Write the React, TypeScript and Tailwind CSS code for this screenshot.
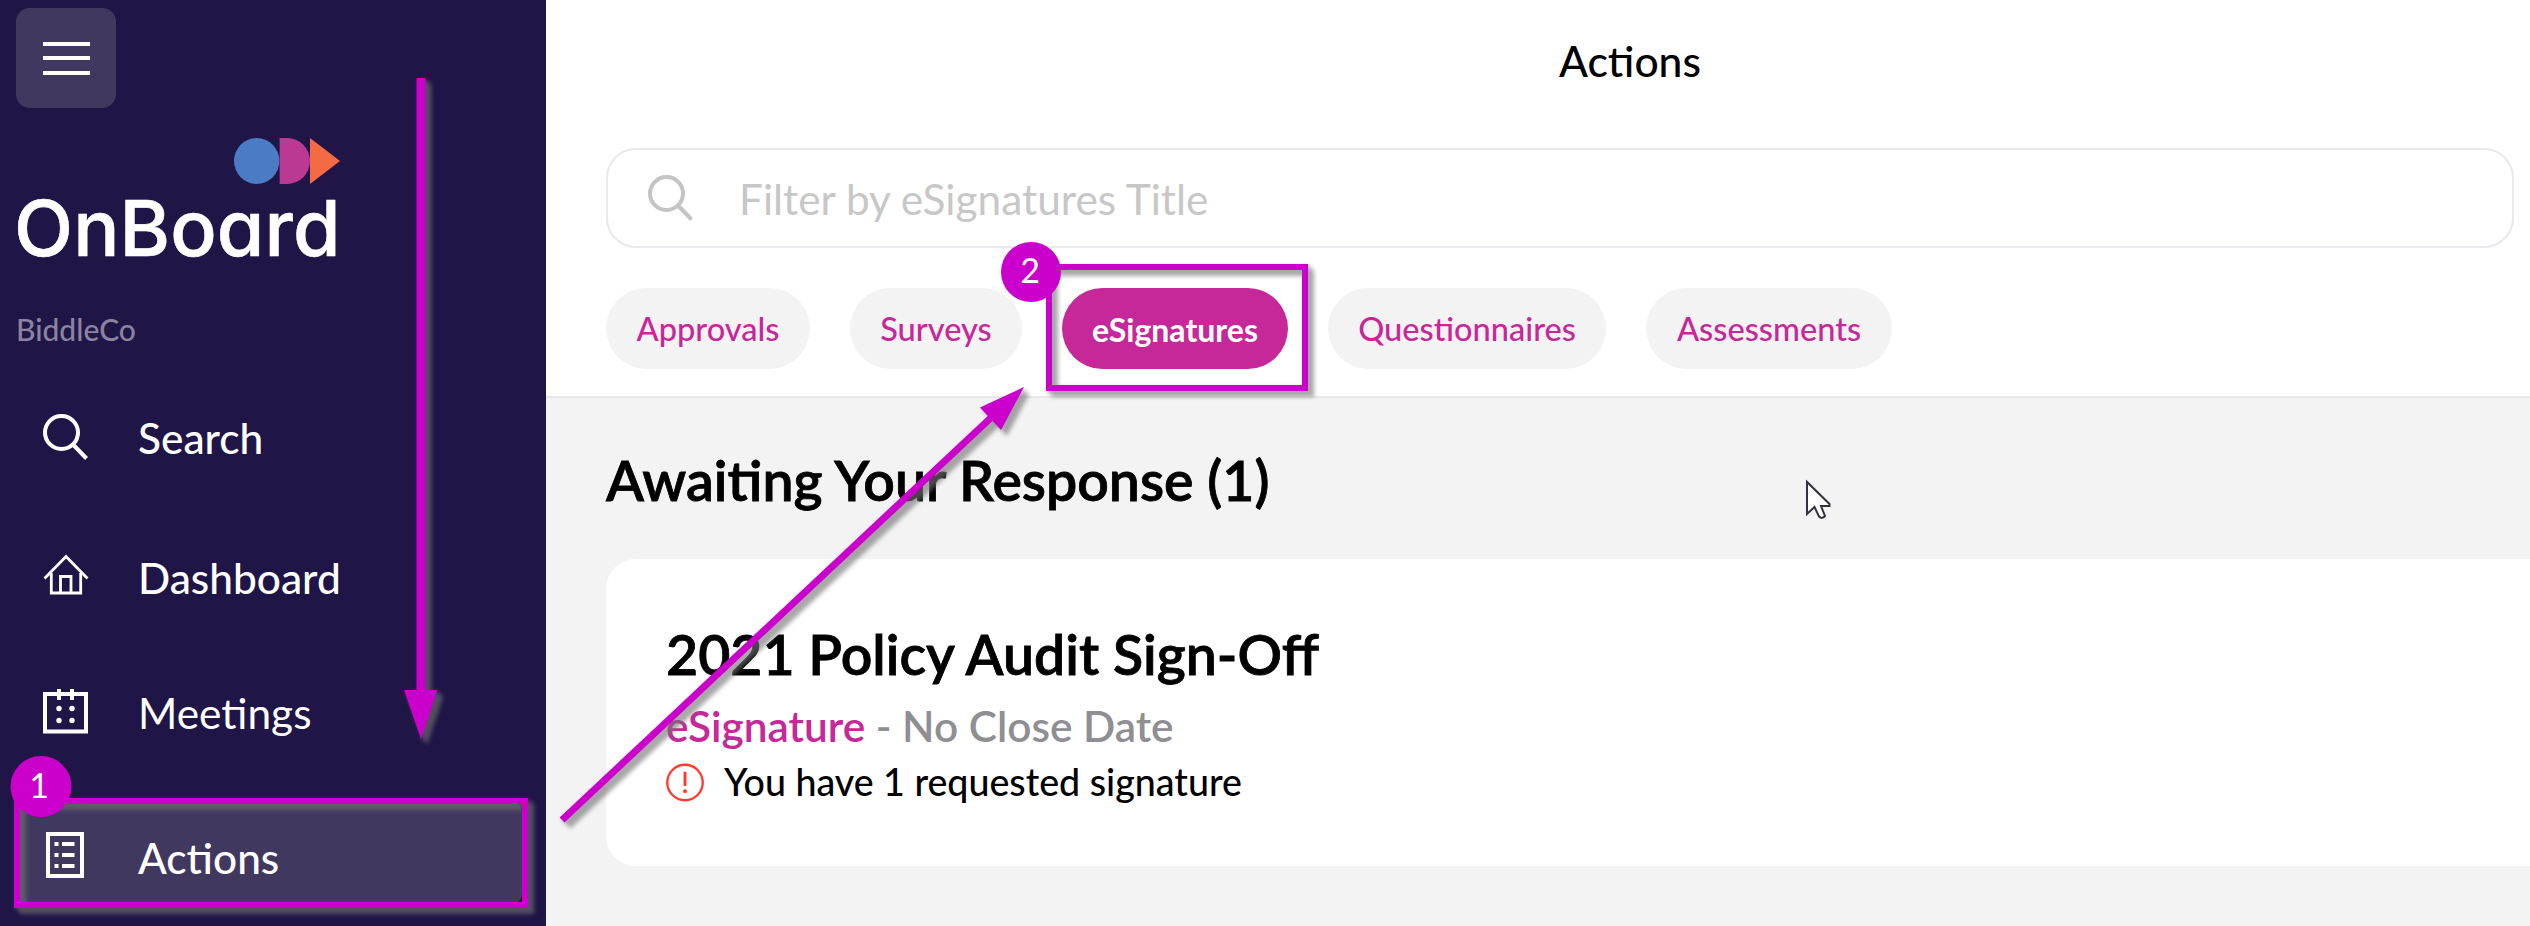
import React from 'react';

interface NavItem {
  label: string;
  icon: React.ReactNode;
  rowClass: string;
  textClass: string;
}

const SearchIcon = ({ className, strokeWidth = 4 }: { className: string; strokeWidth?: number }) => (
  <svg className={className} viewBox="0 0 46 46" fill="none" stroke="currentColor" strokeWidth={strokeWidth}>
    <circle cx="18.5" cy="18.5" r="16.5" />
    <path d="M30 30.5 L43.5 44.5" />
  </svg>
);

const HomeIcon = () => (
  <svg className="h-[46px] w-[46px]" viewBox="0 0 46 46" fill="none" stroke="white" strokeWidth="2.8">
    <path d="M1.5 24.5 L23 2.5 L44.5 24.5" />
    <path d="M8.3 19 V39 H37.7 V19" />
    <path d="M17.5 39 V22.5 H28 V39" />
  </svg>
);

const CalendarIcon = () => (
  <svg className="h-[46px] w-[46px]" viewBox="0 0 46 46" fill="white">
    <rect x="3" y="5" width="41" height="37.5" fill="none" stroke="white" strokeWidth="4" />
    <rect x="15" y="-1" width="4" height="12" />
    <rect x="28" y="-1" width="4" height="12" />
    <circle cx="17" cy="19.5" r="2.7" />
    <circle cx="30" cy="19.5" r="2.7" />
    <circle cx="17" cy="31.5" r="2.7" />
    <circle cx="30" cy="31.5" r="2.7" />
  </svg>
);

const ActionsIcon = () => (
  <svg className="h-[46px] w-[46px]" viewBox="0 0 46 46" fill="white">
    <rect x="6" y="2" width="34" height="42" fill="none" stroke="white" strokeWidth="4" />
    <rect x="12.5" y="10" width="4" height="4" />
    <rect x="20" y="10" width="12.5" height="4" />
    <rect x="12.5" y="21" width="4" height="4" />
    <rect x="20" y="21" width="12.5" height="4" />
    <rect x="12.5" y="32" width="4" height="4" />
    <rect x="20" y="32" width="12.5" height="4" />
  </svg>
);

const navItems: NavItem[] = [
  { label: 'Search', icon: <SearchIcon className="h-[46px] w-[46px] text-white" />, rowClass: 'mt-5 h-[140px] pl-[43px]', textClass: 'pt-px pl-[49px] font-medium' },
  { label: 'Dashboard', icon: <HomeIcon />, rowClass: 'h-[140px] pl-[43px]', textClass: 'pt-px pl-[49px] font-medium' },
  { label: 'Meetings', icon: <CalendarIcon />, rowClass: 'h-[130px] pl-[42px]', textClass: 'pt-px pl-[50px]' },
  {
    label: 'Actions',
    icon: <ActionsIcon />,
    rowClass: 'mt-6 ml-4 mr-6 h-[104px] rounded-xl bg-[#413860] pl-[26px] pt-1',
    textClass: 'pl-[50px] pt-[5px] font-medium',
  },
];

const filters = [
  { label: 'Approvals', width: 'w-[204px]' },
  { label: 'Surveys', width: 'w-[172px]' },
  { label: 'eSignatures', width: 'w-[226px]' },
  { label: 'Questionnaires', width: 'w-[278px]' },
  { label: 'Assessments', width: 'w-[246px]' },
];

function Sidebar() {
  return (
    <aside className="flex h-full w-[546px] shrink-0 flex-col bg-[#201547]">
      <button type="button" className="mt-2 ml-4 flex h-[100px] w-[100px] flex-col items-center justify-center gap-[10.5px] rounded-[14px] bg-[#413860]">
        <span className="h-1 w-[47px] bg-white" />
        <span className="h-1 w-[47px] bg-white" />
        <span className="h-1 w-[47px] bg-white" />
      </button>

      {/* Logo */}
      <svg className="mt-[30px] ml-[234px] h-[46px] w-[106px] shrink-0" viewBox="0 0 106 46">
        <ellipse cx="22.7" cy="23" rx="22.7" ry="23" fill="#4b7bc4" />
        <path d="M45.6 0 H53 A23 23 0 0 1 53 46 H45.6 Z" fill="#b93995" />
        <path d="M76 0 L106 23 L76 46 Z" fill="#f46a45" />
      </svg>
      <div className="mt-[14px] ml-[14px] h-[60px] font-['Inter'] text-[77px] leading-[60px] font-medium tracking-[0.1px] whitespace-nowrap text-white [-webkit-text-stroke:0.6px_white] [font-feature-settings:'cv11']">
        OnBoard
      </div>
      <div className="mt-[53px] ml-4 h-9 text-[30px] leading-9 font-medium text-[#8b84a0]">BiddleCo</div>

      <nav className="flex flex-col">
        {navItems.map((item) => (
          <a key={item.label} className={`flex items-center ${item.rowClass}`}>
            {item.icon}
            <span className={`text-[42.4px] leading-[50px] text-white ${item.textClass}`}>{item.label}</span>
          </a>
        ))}
      </nav>
    </aside>
  );
}

function Header() {
  return (
    <header className="flex h-[398px] flex-col border-b-2 border-[#e8e8e8] bg-white pr-4 pl-[60px]">
      <h1 className="mt-[35px] ml-[140px] h-[52px] text-center text-[42.6px] leading-[52px] font-medium text-black">Actions</h1>
      <div className="mt-[61px] flex h-[100px] items-center rounded-[30px] border-2 border-[#e8e8ee] pl-10">
        <SearchIcon className="h-[46px] w-[46px] text-[#c4c4c4]" />
        <span className="pt-px pl-[45px] text-[42.4px] leading-[50px] text-[#c7c7c7]">Filter by eSignatures Title</span>
      </div>
      <div className="mt-10 flex gap-10">
        {filters.map((filter) => (
          <button
            key={filter.label}
            type="button"
            className={`flex h-[81px] items-center justify-center rounded-full pt-[2px] whitespace-nowrap ${filter.width} ${
              filter.label === 'eSignatures'
                ? 'bg-[#c6289a] text-[32px] font-bold text-white'
                : 'bg-[#f3f3f3] text-[32.6px] font-medium text-[#c6289a]'
            }`}
          >
            {filter.label}
          </button>
        ))}
      </div>
    </header>
  );
}

function ActionCard() {
  return (
    <article className="mt-[34px] h-[307px] rounded-l-[30px] bg-white pt-[64px] pl-[60px]">
      <h3 className="h-[62px] text-[55.4px] leading-[62px] font-semibold text-black [-webkit-text-stroke:0.8px_black]">2021 Policy Audit Sign-Off</h3>
      <p className="mt-[16px] h-[50px] text-[42.4px] leading-[50px] font-semibold text-[#8e8e93]">
        <span className="text-[#c6289a]">eSignature</span> - No Close Date
      </p>
      <div className="mt-[6px] flex h-[50px] items-center">
        <svg className="h-[39px] w-[39px]" viewBox="0 0 40 40" fill="none" stroke="#ff3b30">
          <circle cx="19.5" cy="20" r="18.2" strokeWidth="2.4" />
          <path d="M19.5 9 V23.5" strokeWidth="3" />
          <circle cx="19.5" cy="29" r="2" fill="#ff3b30" stroke="none" />
        </svg>
        <span className="pl-[19px] text-[37.6px] leading-[50px] font-medium text-black">You have 1 requested signature</span>
      </div>
    </article>
  );
}

// Callouts drawn over the page: numbered boxes, arrows and the pointer
function Annotations() {
  return (
    <svg className="pointer-events-none absolute inset-0 h-full w-full" viewBox="0 0 2530 926">
      <defs>
        <filter id="callout-shadow" filterUnits="userSpaceOnUse" x="0" y="0" width="2530" height="926" colorInterpolationFilters="sRGB">
          <feOffset in="SourceAlpha" dx="2" dy="2" result="near" />
          <feOffset in="SourceAlpha" dx="4" dy="4" result="mid" />
          <feOffset in="SourceAlpha" dx="6" dy="6" result="far" />
          <feMerge result="trail">
            <feMergeNode in="near" />
            <feMergeNode in="mid" />
            <feMergeNode in="far" />
          </feMerge>
          <feGaussianBlur in="trail" stdDeviation="2" result="soft" />
          <feFlood floodColor="#737373" floodOpacity="0.62" />
          <feComposite in2="soft" operator="in" result="shade" />
          <feMerge>
            <feMergeNode in="shade" />
            <feMergeNode in="SourceGraphic" />
          </feMerge>
        </filter>
      </defs>
      <g filter="url(#callout-shadow)" fill="none" stroke="#cc00cc">
        <rect x="17" y="801" width="508" height="104" strokeWidth="6" />
        <rect x="1049" y="267" width="256" height="121" strokeWidth="6" />
        <path d="M421 78 V695" strokeWidth="9" />
        <path d="M404 690 H437.5 L421 739 Z" fill="#cc00cc" stroke="none" />
        <path d="M562 820 L996 413" strokeWidth="7" />
        <path d="M980 407.5 L1024 387 L1001 430 Z" fill="#cc00cc" stroke="none" />
      </g>
      <g fill="#cc00cc">
        <circle cx="41" cy="786.5" r="30.5" />
        <circle cx="1031" cy="272" r="30" />
      </g>
      <g fill="white" fontSize="34" textAnchor="middle">
        <text x="39" y="798">1</text>
        <text x="1030" y="283">2</text>
      </g>
      <path
        d="M1807 482 V514 L1814.5 507 L1819 516.5 Q1822 519.5 1825 516 L1821 506 H1829.5 V504 Z"
        fill="white"
        stroke="#35303f"
        strokeWidth="2"
      />
    </svg>
  );
}

export default function App() {
  return (
    <div className="relative flex h-[926px] w-[2530px] overflow-hidden bg-[#f3f3f3] font-['Lato',sans-serif]">
      <Sidebar />
      <main className="flex min-w-0 flex-1 flex-col">
        <Header />
        <section className="flex flex-col pl-[60px]">
          <h2 className="mt-[49px] h-[78px] text-[55.4px] leading-[66px] font-semibold text-black [-webkit-text-stroke:0.8px_black]">Awaiting Your Response (1)</h2>
          <ActionCard />
        </section>
      </main>
      <Annotations />
    </div>
  );
}
